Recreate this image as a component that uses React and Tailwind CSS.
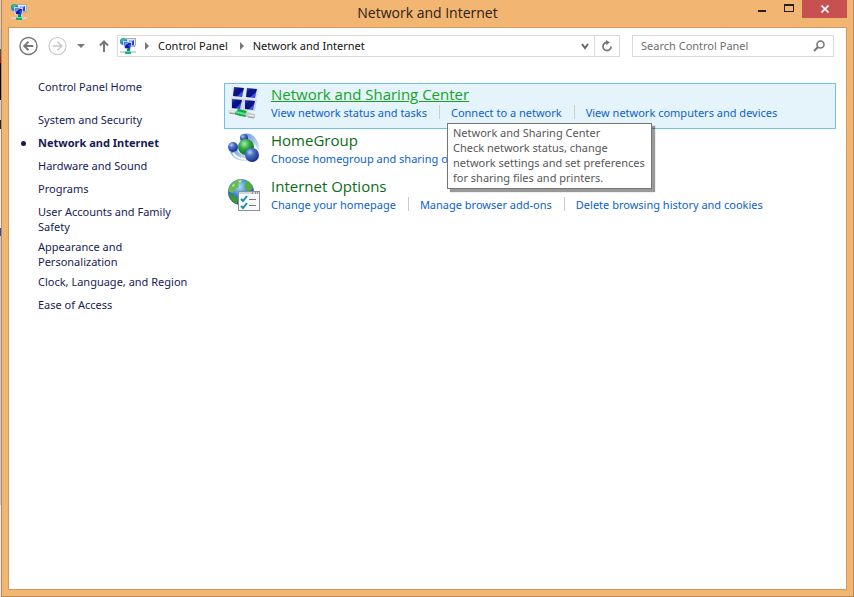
import React, { useState } from 'react';

const categories = [
  { name: 'System and Security' },
  { name: 'Network and Internet', current: true },
  { name: 'Hardware and Sound' },
  { name: 'Programs' },
  { name: 'User Accounts and Family Safety' },
  { name: 'Appearance and Personalization' },
  { name: 'Clock, Language, and Region' },
  { name: 'Ease of Access' },
];

// slice of the window behind, seen along the left edge
const behind = [
  { top: 0, height: 30, color: '#d8cfc4' },
  { top: 30, height: 19, color: '#bccbdc' },
  { top: 49, height: 8, color: '#55504e' },
  { top: 57, height: 6, color: '#b01c1c' },
  { top: 63, height: 37, color: '#000000' },
  { top: 100, height: 20, color: '#c3d0de' },
  { top: 120, height: 9, color: '#222222' },
  { top: 129, height: 99, color: '#e8eef5' },
  { top: 228, height: 8, color: '#1456b4' },
  { top: 236, height: 269, color: '#bccbe0' },
  { top: 505, height: 92, color: '#e8ecf2' },
];

function NetworkIcon() {
  return (
    <svg width="16" height="16" viewBox="0 0 16 16" aria-hidden="true">
      <path d="M6 0h10v7l-1 2H7z" fill="#a9adb5" />
      <path d="M7 1h8v6H8z" fill="#e2e8f2" />
      <path d="M9 2h5v5H9z" fill="#2944cc" />
      <path d="M9 2h5l-4 3z" fill="#a5c0f7" />
      <circle cx="3.500" cy="3.500" r="3.500" fill="#2684d8" />
      <path d="M2 1l2-1 2 1-2 2-3 1z" fill="#42c65c" />
      <path d="M3 3l9 1-1 8-7-1z" fill="#dfe5ef" />
      <path d="M4 4l7 1-1 6-5-1z" fill="#0c1cae" />
      <path d="M4 4l5 .700L5 8z" fill="#7291f2" />
      <path d="M8 7l3-1-1 5z" fill="#2f4cd0" />
      <path d="M7 11h3v2H7z" fill="#0e8c55" />
      <path d="M0 13h16v2H0z" fill="#cfd4d8" />
      <path d="M5 13h6v3H5z" fill="#14b573" />
      <path d="M5 13h6v1H5z" fill="#5fe0a5" />
    </svg>
  );
}

function SharingCenterIcon() {
  return (
    <svg width="32" height="32" viewBox="0 0 32 32" aria-hidden="true">
      <defs>
        <linearGradient id="screen" x1="0" y1="0" x2="1" y2="1">
          <stop offset="0" stopColor="#3a55c4" />
          <stop offset=".3" stopColor="#0a138a" />
          <stop offset=".6" stopColor="#08107e" />
          <stop offset=".72" stopColor="#3c5ce0" />
          <stop offset="1" stopColor="#1c30c0" />
        </linearGradient>
      </defs>
      <path d="M0 23l8 1 3-1 16 4v4l-8-1-17-4z" fill="#c3cace" />
      <path d="M1 24l6 1M20 28l6 1" stroke="#eef1f3" />
      <path d="M1 26l5 1M20 30l6 1" stroke="#939ca2" />
      <path d="M5 0l12 1-2 11-12-1z" fill="#dfe3ec" />
      <path d="M18 1l13 1-2 11-13-1z" fill="#dfe3ec" />
      <path d="M3 11l13 1-2 11-11-1z" fill="#ced4df" />
      <path d="M16 12l13 1-2 11-12-1z" fill="#ced4df" />
      <path d="M6 0l10 1-2 9-9-1z" fill="url(#screen)" />
      <path d="M19 1l10 1-2 9-9-1z" fill="url(#screen)" />
      <path d="M4 12l10 1-2 9-8-1z" fill="url(#screen)" />
      <path d="M17 13l10 1-2 9-8-1z" fill="url(#screen)" />
      <path d="M10 22l5 1 4 1-2 3 1 3-6-1-6-2 2-2z" fill="#12a848" />
      <path d="M8 25l9 2" stroke="#62e088" strokeWidth="2" />
    </svg>
  );
}

function HomeGroupIcon() {
  return (
    <svg width="32" height="32" viewBox="0 0 32 32" aria-hidden="true">
      <defs>
        <radialGradient id="ballBlue" cx=".35" cy=".3" r=".75">
          <stop offset="0" stopColor="#b8d0f5" />
          <stop offset=".35" stopColor="#4d74c8" />
          <stop offset="1" stopColor="#142b80" />
        </radialGradient>
        <radialGradient id="ballGreen" cx=".4" cy=".3" r=".75">
          <stop offset="0" stopColor="#a8ecac" />
          <stop offset=".45" stopColor="#2da341" />
          <stop offset="1" stopColor="#0c6424" />
        </radialGradient>
        <linearGradient id="trail" x1="0" y1="0" x2="1" y2="1">
          <stop offset="0" stopColor="#5f8fd4" />
          <stop offset="1" stopColor="#e6f1fb" />
        </linearGradient>
      </defs>
      <path d="M14 2c5-3 11-1 14 4 3 4 4 8 3 13-2-6-5-9-10-11z" fill="url(#trail)" />
      <path d="M1 15c1 8 8 14 18 13l2-6C14 23 10 20 9 15z" fill="url(#trail)" />
      <path d="M5 20c3 5 8 6 13 6" stroke="#f6fafe" strokeWidth="2" fill="none" />
      <circle cx="16" cy="5" r="4" fill="url(#ballBlue)" />
      <circle cx="5" cy="14" r="5" fill="url(#ballBlue)" />
      <circle cx="18" cy="14" r="8" fill="url(#ballGreen)" />
      <circle cx="24" cy="22" r="7" fill="url(#ballBlue)" />
    </svg>
  );
}

function InternetOptionsIcon() {
  return (
    <svg width="32" height="32" viewBox="0 0 32 32" aria-hidden="true">
      <defs>
        <radialGradient id="globe" cx=".45" cy=".3" r=".7">
          <stop offset="0" stopColor="#a5dcf8" />
          <stop offset=".5" stopColor="#3a86d0" />
          <stop offset="1" stopColor="#173f94" />
        </radialGradient>
      </defs>
      <circle cx="13" cy="13" r="13" fill="url(#globe)" />
      <path d="M3 6c3-4 7-6 11-6l-1 3-3 2 1 3-4 2-2 4-4-1C0 11 1 8 3 6z" fill="#6dbb4a" />
      <path d="M17 1c4 1 7 4 8 8l-3 3-4-1-2-4 2-2z" fill="#58ab3d" />
      <path d="M1 15l5 1 4 4-1 5C5 24 2 20 1 15z" fill="#3f9637" />
      <path d="M10 2l4-1-2 3zM4 6l3-1-2 3z" fill="#d6f2b8" />
      <rect x="10.500" y="12.500" width="21" height="19" fill="#f9fafb" stroke="#8b8f94" />
      <path d="M11 13h20v2H11z" fill="#d3d7db" />
      <path d="M24 14h1M27 14h1M29 14h1" stroke="#555" />
      <path d="M13 20l2 2 4-5M13 27l2 2 4-5" stroke="#1c8fae" strokeWidth="2" fill="none" />
      <path d="M21 20.500h7M21 26.500h7" stroke="#75797e" />
    </svg>
  );
}

const tasks = [
  {
    title: 'Network and Sharing Center',
    icon: SharingCenterIcon,
    links: ['View network status and tasks', 'Connect to a network', 'View network computers and devices'],
    hovered: true,
  },
  {
    title: 'HomeGroup',
    icon: HomeGroupIcon,
    links: ['Choose homegroup and sharing options'],
  },
  {
    title: 'Internet Options',
    icon: InternetOptionsIcon,
    links: ['Change your homepage', 'Manage browser add-ons', 'Delete browsing history and cookies'],
  },
];

function TitleBar() {
  return (
    <header className="grid h-[27px] grid-cols-[1fr_auto_1fr] pl-[6px] pr-[6px]">
      <div className="pt-1 pl-[3px]">
        <NetworkIcon />
      </div>
      <h1 className="font-['Open_Sans',sans-serif] text-[14px] leading-[26px] text-[#2b2118]">Network and Internet</h1>
      <div className="flex items-start justify-end">
        <button aria-label="Minimize" className="flex h-[18px] w-[27px] justify-center pt-[10px]">
          <span className="h-[2px] w-2 bg-[#222]" />
        </button>
        <button aria-label="Maximize" className="flex h-[18px] w-[27px] justify-center pt-1">
          <span className="h-2 w-[10px] border border-t-2 border-[#222]" />
        </button>
        <button aria-label="Close" className="flex h-[18px] w-[45px] items-center justify-center bg-[#c75050]">
          <svg width="8" height="8" viewBox="0 0 8 8">
            <path d="M0.5 0.5l7 7M7.5 0.5l-7 7" stroke="#fff" strokeWidth="1.6" />
          </svg>
        </button>
      </div>
    </header>
  );
}

function Crumb({ children }) {
  return (
    <>
      <svg width="4" height="8" viewBox="0 0 4 8" className="shrink-0" aria-hidden="true">
        <path d="M0 0l4 4-4 4z" fill="#777" />
      </svg>
      <a href="#" className="mr-[3px] whitespace-nowrap text-[#111]">{children}</a>
    </>
  );
}

function NavBar() {
  const [query, setQuery] = useState('');

  return (
    <nav className="flex h-9 items-center pl-[10px] pr-3">
      <button aria-label="Back">
        <svg width="19" height="20" viewBox="0 0 20 20" fill="none" stroke="#777">
          <circle cx="10" cy="10" r="9" strokeWidth="1.5" />
          <path d="M15 10H6M10 5.5L5.5 10l4.500 4.500" strokeWidth="2" />
        </svg>
      </button>
      <button aria-label="Forward" className="ml-[10px]" disabled>
        <svg width="19" height="20" viewBox="0 0 20 20" fill="none" stroke="#c8c8c8">
          <circle cx="10" cy="10" r="9" strokeWidth="1.2" />
          <path d="M5 10h9M10 5.500l4.500 4.500-4.500 4.500" strokeWidth="1.6" />
        </svg>
      </button>
      <button aria-label="Recent locations" className="ml-[10px]">
        <svg width="8" height="4" viewBox="0 0 8 4">
          <path d="M0 0h8L4 4z" fill="#777" />
        </svg>
      </button>
      <button aria-label="Up" className="ml-[14px]">
        <svg width="10" height="12" viewBox="0 0 10 12" fill="none" stroke="#777" strokeWidth="2">
          <path d="M5 12V2M1 5.500L5 1.500l4 4" />
        </svg>
      </button>
      <div className="ml-2 flex h-[22px] flex-1 border border-[#d9d9d9]">
        <div className="flex flex-1 items-center gap-[9px] pl-[2px]">
          <NetworkIcon />
          <Crumb>Control Panel</Crumb>
          <Crumb>Network and Internet</Crumb>
        </div>
        <button aria-label="Previous locations" className="flex w-[18px] items-center justify-center">
          <svg width="8" height="7" viewBox="0 0 8 7" fill="none" stroke="#666" strokeWidth="2">
            <path d="M1 1l3 4 3-4" />
          </svg>
        </button>
        <button aria-label="Refresh" className="flex w-[25px] items-center justify-center border-l border-[#d9d9d9]">
          <svg width="12" height="12" viewBox="0 0 12 12" fill="none" stroke="#777" strokeWidth="1.800">
            <path d="M6 2.500a4 4 0 1 0 4 4" />
            <path d="M5 0l4 2.500L5 5z" fill="#777" stroke="none" />
          </svg>
        </button>
      </div>
      <div className="ml-3 flex h-[22px] w-[202px] items-center border border-[#d9d9d9] pl-2 pr-2">
        <input
          type="text"
          aria-label="Search Control Panel"
          placeholder="Search Control Panel"
          value={query}
          onChange={(e) => setQuery(e.target.value)}
          className="min-w-0 flex-1 outline-none placeholder:text-[#6d6d6d]"
        />
        <svg width="12" height="12" viewBox="0 0 12 12" fill="none" stroke="#777" aria-hidden="true">
          <circle cx="7.500" cy="4.500" r="3.500" strokeWidth="1.600" />
          <path d="M5 7L1 11" strokeWidth="2.200" />
        </svg>
      </div>
    </nav>
  );
}

function Sidebar() {
  return (
    <aside className="w-[215px] shrink-0 pl-[29px] pr-[28px] leading-[15px] text-[#151c55]">
      <a href="#" className="block">Control Panel Home</a>
      <ul className="mt-[18px] flex flex-col gap-[5px]">
        {categories.map((c) => (
          <li key={c.name} className="relative min-h-[18px]">
            {c.current && <span className="absolute top-[6px] -left-[17px] size-[5px] rounded-full bg-[#151c55]" />}
            <a href="#" className={c.current ? 'font-bold' : ''}>{c.name}</a>
          </li>
        ))}
      </ul>
    </aside>
  );
}

function Task({ task }) {
  const Icon = task.icon;
  return (
    <section
      className={`relative flex h-[46px] border pl-[3px] ${
        task.hovered ? 'border-[#70c0e7] bg-[#e5f3fb]' : 'border-transparent'
      }`}
    >
      <div className="w-[43px] shrink-0 pt-[3px]">
        <Icon />
      </div>
      <div>
        <h2 className="pb-px font-['Open_Sans',sans-serif] text-[15px] leading-5">
          <a href="#" className={task.hovered ? 'text-[#12a51f] underline' : 'text-[#0b6b17]'}>{task.title}</a>
        </h2>
        <ul className="flex leading-[15px] text-[#0a62cc]">
          {task.links.map((link, i) => (
            <li key={link} className="flex whitespace-nowrap">
              {i > 0 && <span className="mr-[11px] ml-3 h-[14px] w-px bg-[#cccccc]" />}
              <a href="#">{link}</a>
            </li>
          ))}
        </ul>
      </div>
      {task.hovered && (
        <div
          role="tooltip"
          className="absolute top-[39px] left-[222px] z-10 w-[205px] border border-[#767676] bg-white pt-px pb-[3px] pl-[5px] leading-[15px] text-[#575757] shadow-[3px_3px_1px_rgba(0,0,0,0.4)]"
        >
          <p>Network and Sharing Center</p>
          <p>Check network status, change network settings and set preferences for sharing files and printers.</p>
        </div>
      )}
    </section>
  );
}

function App() {
  return (
    <div className="relative flex min-h-screen flex-col pl-px font-['Noto_Sans',sans-serif] text-[11px]">
      {behind.map((s) => (
        <span
          key={s.top}
          className="absolute left-0 w-px"
          style={{ top: s.top, height: s.height, backgroundColor: s.color }}
        />
      ))}
      <div className="flex flex-1 flex-col border border-t-0 border-[#b98a58] bg-[#f2b572]">
        <TitleBar />
        <div className="mx-[6px] mb-[6px] flex flex-1 flex-col border border-[#cf9b60] bg-white">
          <NavBar />
          <div className="flex flex-1 pt-[15px]">
            <Sidebar />
            <main className="mr-[10px] min-w-0 flex-1 pt-1">
              {tasks.map((t) => (
                <Task key={t.title} task={t} />
              ))}
            </main>
          </div>
        </div>
      </div>
    </div>
  );
}

export default App;
